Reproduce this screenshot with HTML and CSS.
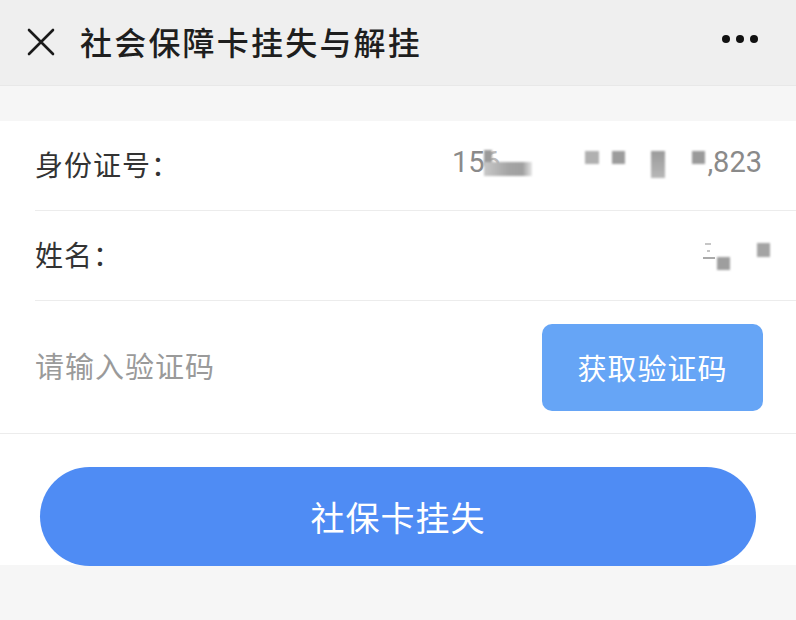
FILE: index.html
```html
<!DOCTYPE html>
<html lang="zh">
<head>
<meta charset="utf-8">
<link rel="stylesheet" href="styles.css">
</head>
<body>
<div class="page">
  <header class="nav">
    <svg class="close" width="28" height="28" viewBox="0 0 28 28"><path d="M2 2 L26 26 M26 2 L2 26" stroke="#1a1a1a" stroke-width="2.6" stroke-linecap="round"/></svg>
    <h1 class="title">社会保障卡挂失与解挂</h1>
    <div class="more"><span></span><span></span><span></span></div>
  </header>
  <div class="band"></div>
  <section class="card">
    <div class="row">
      <span class="label">身份证号：</span>
      <span class="value id">
        <span class="digits">15<span class="fade">6</span></span>
        <span class="gap"></span>
        <span class="digits">,823</span>
        <i class="blk b1"></i><i class="blk b2"></i><i class="blk b3"></i><i class="blk b4"></i><i class="blk b5"></i><i class="blk b6"></i>
      </span>
    </div>
    <div class="row">
      <span class="label">姓名：</span>
      <span class="value name">
        <i class="blk n1"></i><i class="blk n2"></i><i class="dash d1"></i><i class="dash d2"></i><i class="dash d3"></i>
      </span>
    </div>
    <div class="row code-row">
      <span class="placeholder">请输入验证码</span>
      <button class="code-btn">获取验证码</button>
    </div>
  </section>
  <section class="action">
    <button class="main-btn">社保卡挂失</button>
  </section>
</div>
</body>
</html>
```

FILE: styles.css
```css
* { box-sizing: border-box; margin: 0; padding: 0; }
html, body { width: 796px; height: 620px; overflow: hidden; }
body {
  background: #f6f6f6;
  font-family: "Noto Sans CJK SC", "Noto Sans", sans-serif;
}
.page { width: 796px; }
.nav {
  height: 86px;
  background: #efefef;
  display: flex;
  align-items: center;
  padding: 0 38px 0 27px;
  border-bottom: 1px solid #e8e8e8;
}
.close { flex: none; margin-top: -1px; }
.title {
  margin-left: 25px;
  font-size: 32px;
  font-weight: 500;
  color: #1e1e1e;
  letter-spacing: 2.2px;
  flex: 1;
  line-height: 1;
  margin-top: -4px;
}
.more { display: flex; gap: 6px; margin-top: -8px; }
.more span { width: 8px; height: 8px; border-radius: 50%; background: #111; }
.band { height: 35px; background: #f6f6f6; }
.card { background: #fff; }
.row {
  height: 90px;
  margin-left: 35px;
  padding-right: 34px;
  display: flex;
  align-items: center;
  justify-content: space-between;
  border-bottom: 1px solid #ececec;
}
.label { font-size: 28px; color: #333; line-height: 1; letter-spacing: 1px; margin-top: -4px; }
.value { position: relative; display: flex; align-items: center; height: 50px; }
.id { width: 310px; font-family: Roboto, "Noto Sans", sans-serif; font-size: 29px; color: #8a8a8a; justify-content: space-between; margin-top: -6px; }
.digits { line-height: 1; }
.fade { color: #bbb; }
.gap { flex: 1; }
.blk { position: absolute; display: block; background: #a6a6a6; filter: blur(1px); }
.b1 { left: 32px; top: 12px; width: 8px; height: 16px; background: #9a9a9a; }
.b2 { left: 32px; top: 24px; width: 48px; height: 14px; background: linear-gradient(90deg, #c8c8c8, #a5a5a5 50%, #a0a0a0 80%, #e6e6e6); }
.b3 { left: 133px; top: 13px; width: 14px; height: 13px; background: #b0b0b0; }
.b4 { left: 160px; top: 13px; width: 13px; height: 13px; background: #9c9c9c; }
.b5 { left: 199px; top: 13px; width: 14px; height: 27px; background: linear-gradient(180deg, #9a9a9a, #b8b8b8); }
.b6 { left: 240px; top: 13px; width: 13px; height: 13px; background: #9a9a9a; }
.code-row { height: 133px; margin-left: 0; padding-left: 35px; padding-right: 33px; }
.name { width: 80px; margin-top: 20px; margin-right: -21px; }
.n1 { left: 14px; top: 16px; width: 13px; height: 13px; background: #9e9e9e; }
.n2 { left: 54px; top: 2px; width: 13px; height: 14px; background: #a4a4a4; }
.dash { position: absolute; display: block; height: 2px; background: #c6c6c6; }
.d1 { left: 2px; top: 2px; width: 6px; }
.d2 { left: 4px; top: 9px; width: 3px; }
.d3 { left: 0; top: 16px; width: 12px; background: #aaa; }
.placeholder { font-size: 29px; color: #9a9a9a; line-height: 1; letter-spacing: 1px; margin-top: -4px; }
.code-btn {
  width: 221px;
  height: 87px;
  border: none;
  border-radius: 10px;
  background: #66a5f6;
  color: #fff;
  font-family: "Noto Sans CJK SC", sans-serif;
  font-size: 29px;
  letter-spacing: 1px;
  margin-top: 0;
}
.action {
  background: #fff;
  height: 131px;
  padding: 33px 40px 0 40px;
}
.main-btn {
  display: block;
  width: 716px;
  height: 99px;
  border: none;
  border-radius: 50px;
  background: #4f8cf4;
  color: #fff;
  font-family: "Noto Sans CJK SC", sans-serif;
  font-size: 34px;
  letter-spacing: 1px;
}
```
